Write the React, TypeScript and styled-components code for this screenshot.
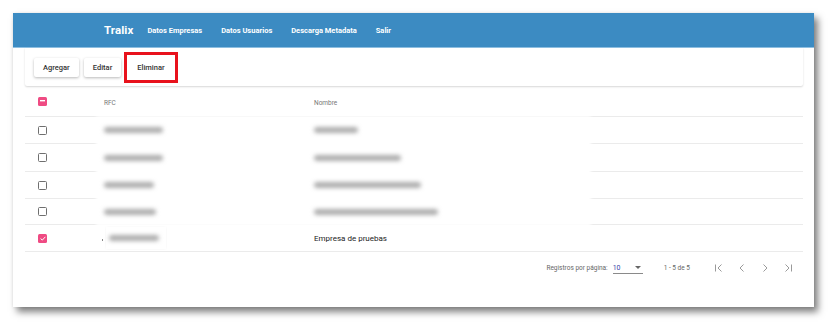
import styled, { createGlobalStyle } from 'styled-components'

const GlobalStyle = createGlobalStyle`
  html, body {
    margin: 0;
    padding: 0;
    background: #fff;
    font-family: Roboto, "Liberation Sans", Arial, sans-serif;
  }
`

const Page = styled.div`
  padding: 13px 0 0 13px;
  height: 333px;
  box-sizing: border-box;
`

const Window = styled.div`
  width: 801px;
  height: 294px;
  background: #fff;
  box-shadow: 4px 5px 7px rgba(0, 0, 0, 0.5), 0 0 3px rgba(0, 0, 0, 0.08);
  display: flex;
  flex-direction: column;
`

const TopBar = styled.header`
  height: 35px;
  flex: none;
  background: #3c8bc2;
  border-bottom: 1px solid #8fc0e2;
  box-sizing: border-box;
  display: flex;
  align-items: center;
  padding-left: 91px;
  color: #fff;
`

const Brand = styled.span`
  font-size: 11.5px;
  font-weight: 700;
  margin-right: 14px;
  letter-spacing: 0.1px;
`

const Nav = styled.nav`
  display: flex;
  gap: 19px;
  font-size: 7.5px;
  font-weight: 700;
`

const Content = styled.main`
  padding: 0 11px 0 12px;
  flex: 1;
`

const Toolbar = styled.div`
  height: 38px;
  display: flex;
  align-items: center;
  padding-left: 9px;
  border-radius: 0 0 2px 2px;
  box-shadow: 0 1px 2px rgba(0, 0, 0, 0.16);
`

const Button = styled.button<{ $gap?: number }>`
  height: 19px;
  padding: 0 9px;
  border: none;
  border-radius: 2px;
  background: #fff;
  box-shadow: 0 1px 3px rgba(0, 0, 0, 0.28);
  font-family: Roboto, "Liberation Sans", Arial, sans-serif;
  font-size: 7.5px;
  font-weight: 500;
  color: #333;
  margin-right: ${(p) => p.$gap ?? 5}px;
`

const Highlight = styled.span`
  display: inline-flex;
  border: 3px solid #e8121c;
  padding: 3px 1px;
  margin-left: -2px;

  ${Button} {
    margin-right: 0;
    box-shadow: none;
  }
`

const Table = styled.div`
  position: relative;
`

const Row = styled.div<{ $height: number }>`
  display: grid;
  grid-template-columns: 79px 210px 1fr;
  align-items: center;
  box-sizing: border-box;
  height: ${(p) => p.$height}px;
  border-bottom: 1px solid #ebebeb;
  font-size: 8px;
  color: #222;
`

const HeadCell = styled.span`
  font-size: 6.5px;
  color: #777;
  padding-top: 3px;
`

const CheckCell = styled.span`
  padding-left: 13px;
  display: flex;
`

const Box = styled.span<{ $on?: boolean }>`
  width: 9px;
  height: 9px;
  box-sizing: border-box;
  border-radius: 1.5px;
  border: ${(p) => (p.$on ? 'none' : '1.5px solid #6f6f6f')};
  background: ${(p) => (p.$on ? '#ef4b83' : '#fff')};
  display: flex;
  align-items: center;
  justify-content: center;
`

const Blur = styled.span`
  position: relative;
  z-index: 2;
  display: block;
  height: 6px;
  border-radius: 3px;
  background: #adadad;
  filter: blur(2px);
`

const Mask = styled.div`
  position: absolute;
  z-index: 1;
  left: 73px;
  top: 32px;
  width: 491px;
  height: 106px;
  background: #fff;
  box-shadow: 0 0 3px 2px #fff;
`

const PatchCell = styled.span`
  display: flex;
  align-items: center;
  gap: 3px;
  margin-left: -2px;
`

const Patch = styled.span`
  width: 60px;
  height: 22px;
  background: #fff;
  display: flex;
  align-items: center;
  padding-left: 3px;
  box-sizing: border-box;
  box-shadow: 0 0 2px rgba(0, 0, 0, 0.05);
`

const Tick = styled.span`
  width: 1px;
  height: 2px;
  background: #888;
  margin-top: 3px;
`

const Footer = styled.div`
  height: 32px;
  display: flex;
  align-items: center;
  justify-content: flex-end;
  padding-right: 9px;
  font-size: 6.5px;
  color: #666;
`

const Select = styled.span`
  margin-left: 5px;
  width: 30px;
  height: 11px;
  border-bottom: 1px solid #8a8a8a;
  display: flex;
  align-items: center;
  justify-content: space-between;
  color: #3a46a8;
  font-size: 7px;
  margin-right: 21px;
`

const Caret = styled.span`
  width: 0;
  height: 0;
  border-left: 3px solid transparent;
  border-right: 3px solid transparent;
  border-top: 3px solid #666;
  margin-right: 2px;
`

const Pager = styled.div`
  display: flex;
  gap: 11px;
  margin-left: 23px;
`

const Icon = ({ d }: { d: string }) => (
  <svg width="12" height="12" viewBox="0 0 12 12" fill="none" stroke="#9a9a9a" strokeWidth="1">
    <path d={d} />
  </svg>
)

const rows = [
  { rfc: 59, name: 44, h: 27 },
  { rfc: 59, name: 87, h: 28 },
  { rfc: 50, name: 107, h: 27 },
  { rfc: 52, name: 124, h: 26 },
]

export default function App() {
  return (
    <>
      <GlobalStyle />
      <Page>
        <Window>
          <TopBar>
            <Brand>Tralix</Brand>
            <Nav>
              <span>Datos Empresas</span>
              <span>Datos Usuarios</span>
              <span>Descarga Metadata</span>
              <span>Salir</span>
            </Nav>
          </TopBar>
          <Content>
            <Toolbar>
              <Button>Agregar</Button>
              <Button>Editar</Button>
              <Highlight>
                <Button>Eliminar</Button>
              </Highlight>
            </Toolbar>
            <Table>
              <Row $height={31}>
                <CheckCell>
                  <Box $on>
                    <svg width="5" height="2" viewBox="0 0 5 2">
                      <rect width="5" height="1.4" fill="#fff" />
                    </svg>
                  </Box>
                </CheckCell>
                <HeadCell>RFC</HeadCell>
                <HeadCell>Nombre</HeadCell>
              </Row>
              <Mask />
              {rows.map((r, i) => (
                <Row key={i} $height={r.h}>
                  <CheckCell>
                    <Box />
                  </CheckCell>
                  <Blur style={{ width: r.rfc }} />
                  <Blur style={{ width: r.name }} />
                </Row>
              ))}
              <Row $height={27}>
                <CheckCell>
                  <Box $on>
                    <svg width="6" height="5" viewBox="0 0 6 5" fill="none" stroke="#fff" strokeWidth="1">
                      <path d="M0.6 2.6 L2.3 4.1 L5.4 0.8" />
                    </svg>
                  </Box>
                </CheckCell>
                <PatchCell>
                  <Tick />
                  <Patch>
                    <Blur style={{ width: 50 }} />
                  </Patch>
                </PatchCell>
                <span>Empresa de pruebas</span>
              </Row>
            </Table>
            <Footer>
              <span>Registros por página:</span>
              <Select>
                <span>10</span>
                <Caret />
              </Select>
              <span>1 - 5 de 5</span>
              <Pager>
                <Icon d="M2.5 2.5 V9.5 M8.5 2.5 L5 6 L8.5 9.5" />
                <Icon d="M7.5 2.5 L4 6 L7.5 9.5" />
                <Icon d="M4.5 2.5 L8 6 L4.5 9.5" />
                <Icon d="M3.5 2.5 L7 6 L3.5 9.5 M9.5 2.5 V9.5" />
              </Pager>
            </Footer>
          </Content>
        </Window>
      </Page>
    </>
  )
}
